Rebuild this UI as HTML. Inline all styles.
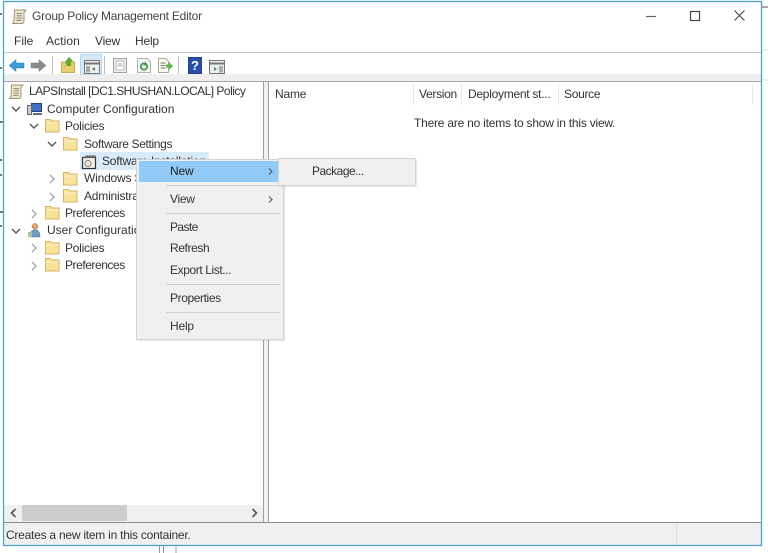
<!DOCTYPE html>
<html><head><meta charset="utf-8"><style>
html,body{margin:0;padding:0;background:#fff}
#r{position:relative;width:768px;height:553px;overflow:hidden;background:#fff;font:12px/16px "Liberation Sans",sans-serif;color:#333;filter:blur(.25px)}
#r div,#r svg{position:absolute}
.t{white-space:nowrap;height:16px}
.b{background:#f0f0f0}
</style></head><body><div id="r">
<svg width="768" height="553" style="left:0;top:0"><defs>
<g id="f"><path d="M.5 1.500h5l1 1.500h7.500v11H.5z" fill="#f9e29a" stroke="#d6b264"/><path d="M1.500 5h12" stroke="#fff4cf"/></g>
<path id="cd" d="M0 0l4 4 4-4" fill="none" stroke="#555" stroke-width="1.400"/>
<path id="cr" d="M0 0l4 4-4 4" fill="none" stroke="#a6a6a6" stroke-width="1.400"/>
<g id="s"><path d="M3.500 1H15l-2 2.500v8.500c0 1.500-1 2.500-2 2.500H1c1.500 0 2-1 2-2.500z" fill="#efe6c8" stroke="#9c9478"/><path d="M5.500 4.500h5.500M5.500 6.800h5.500M5.500 9.100h5.500M5 11.400h5.500" stroke="#8d8d80"/></g>
</defs>
<path d="M0 14h2M0 68h2M0 122h3M0 160h2M0 175h2M0 212h3M0 226h2" stroke="#777" stroke-width="2"/>
<path d="M762 7h6" stroke="#aaa" stroke-width="2"/><path d="M762 50h6M762 80h6" stroke="#ddd"/>
<path d="M159.500 546v7M163.500 546v7M176 546v7" stroke="#999"/>
</svg>

<!-- chrome -->
<div style="left:4px;top:52px;width:757px;height:1px;background:#c4c4c4"></div>
<div style="left:4px;top:74px;width:757px;height:7px;background:#eeeeee"></div>
<div style="left:4px;top:81px;width:757px;height:1px;background:#a8a8a8"></div>
<div class="t" style="left:32px;top:8px;letter-spacing:-.23px;color:#444">Group Policy Management Editor</div>
<div class="t" style="left:14px;top:33px">File</div>
<div class="t" style="left:46px;top:33px;letter-spacing:.1px">Action</div>
<div class="t" style="left:95px;top:33px;letter-spacing:-.2px">View</div>
<div class="t" style="left:135px;top:33px;letter-spacing:-.2px">Help</div>
<svg width="768" height="100" style="left:0;top:0">
<use href="#s" transform="translate(11 9)"/>
<path d="M646 16.500h10" stroke="#666" stroke-width="1.200"/>
<rect x="690.500" y="11.500" width="9" height="9" fill="none" stroke="#444" stroke-width="1.200"/>
<path d="M734.500 10.500l10 10M744.500 10.500l-10 10" stroke="#444" stroke-width="1.100"/>
<rect x="80.500" y="54.500" width="21" height="20" fill="#d4e8f8" stroke="#b6d8f2"/>
<path d="M9 65.500l7-6v3.500h8v5h-8v3.500z" fill="#3d9bd6" stroke="#2b7fb8" stroke-width=".5"/>
<path d="M46 65.500l-7-6v3.500h-8v5h8v3.500z" fill="#8a8a8a" stroke="#777" stroke-width=".5"/>
<path d="M52.500 56v18M104.500 56v18M178.500 56v18" stroke="#bcbcbc"/>
<path d="M61.500 62h13v10.500h-13z" fill="#e9cd6e" stroke="#c7a94c"/><path d="M65 62l4-5 4 4-2 1v4h-4z" fill="#5eaa3c"/>
<g transform="translate(84 60)"><rect x=".5" y=".5" width="15" height="13" fill="#eee" stroke="#777"/><path d="M1 3.500h14" stroke="#777" stroke-width="2"/><rect x="2" y="6" width="4" height="6.500" fill="#aaa"/><path d="M11 7v4l-3-2z" fill="#4a8a6a"/></g>
<g transform="translate(113 58)"><rect x=".5" y=".5" width="13" height="14" fill="#eeeeee" stroke="#a0a0a0"/><rect x="3" y="3" width="8" height="9" fill="#fff" stroke="#b5b5b5"/><path d="M4.500 6h5M4.500 8h5" stroke="#aaa"/></g>
<g transform="translate(137 58)"><path d="M.5.500h10l3 3v11H.5z" fill="#f4f4f4" stroke="#b0b0b0"/><circle cx="7" cy="8.500" r="3.200" fill="none" stroke="#4a9a50" stroke-width="1.800"/><path d="M9 3.500v4h-3z" fill="#4a9a50"/></g>
<g transform="translate(158 58)"><path d="M.5.500h7l3 3v11H.5z" fill="#fbfbf0" stroke="#a8a890"/><path d="M2.500 5h5M2.500 7.500h5M2.500 10h5" stroke="#777"/><path d="M8 6.500h3V4l4 4-4 4V9.500H8z" fill="#5eb84a"/></g>
<rect x="188.500" y="57.500" width="13" height="16" fill="#2a4fa8" stroke="#24408c"/>
<text x="195" y="70" font-family="Liberation Sans" font-size="13" font-weight="bold" fill="#fff" text-anchor="middle">?</text>
<g transform="translate(209 60)"><rect x=".5" y=".5" width="15" height="13" fill="#eee" stroke="#777"/><path d="M1 3.500h14" stroke="#777" stroke-width="2"/><rect x="10" y="6" width="4" height="6.500" fill="#aaa"/><path d="M5 7v4l3-2z" fill="#4a8a6a"/></g>
</svg>

<!-- left pane -->
<div style="left:4px;top:82px;width:259px;height:440px;background:#fff;border-right:1px solid #a0a0a0"></div>
<div style="left:80px;top:152px;width:129px;height:18px;background:#d9ebf9"></div>
<svg width="270" height="280" style="left:0;top:0">
<use href="#s" transform="translate(8 84)"/>
<use href="#cd" x="12" y="107"/>
<g transform="translate(27 102)"><rect x="4.500" y="1.500" width="10" height="8" fill="#3f6fc4" stroke="#27407c"/><rect x=".5" y="3.500" width="4" height="9" fill="#c4ccd8" stroke="#667"/><path d="M6 12h9" stroke="#5c6a80" stroke-width="2"/></g>
<use href="#cd" x="30" y="124"/><use href="#f" x="45" y="118"/>
<use href="#cd" x="48" y="142"/><use href="#f" x="63" y="136"/>
<g transform="translate(82 155)"><rect x=".5" y="2.500" width="13" height="11" fill="#f1efe6" stroke="#333" stroke-width="1.200"/><path d="M1 3l3-2.500h10l-1 2.500z" fill="#666"/><circle cx="6" cy="8.500" r="3" fill="#fff" stroke="#777"/><circle cx="6" cy="8.500" r="1" fill="#e5b94c"/></g>
<use href="#cr" x="50" y="175"/><use href="#f" x="63" y="171"/>
<use href="#cr" x="50" y="193"/><use href="#f" x="63" y="188"/>
<use href="#cr" x="32" y="210"/><use href="#f" x="45" y="205"/>
<use href="#cd" x="12" y="229"/>
<g transform="translate(27 223)"><circle cx="8" cy="3.500" r="3" fill="#d9a878" stroke="#8a7050" stroke-width=".5"/><path d="M3 14c0-6 2-7 5-7s5 1 5 7z" fill="#6f9cc4" stroke="#4c7090" stroke-width=".5"/><rect x="1" y="9" width="4" height="5" fill="#a8c4a8"/></g>
<use href="#cr" x="32" y="244"/><use href="#f" x="45" y="240"/>
<use href="#cr" x="32" y="262"/><use href="#f" x="45" y="257"/>
</svg>
<div class="t" style="left:29px;top:83px;letter-spacing:-.52px">LAPSInstall [DC1.SHUSHAN.LOCAL] Policy</div>
<div class="t" style="left:47px;top:101px">Computer Configuration</div>
<div class="t" style="left:65px;top:118px;letter-spacing:-.25px">Policies</div>
<div class="t" style="left:84px;top:136px;letter-spacing:-.35px">Software Settings</div>
<div class="t" style="left:102px;top:153px;letter-spacing:-.2px">Software Installation</div>
<div class="t" style="left:84px;top:170px;letter-spacing:-.2px">Windows Settings</div>
<div class="t" style="left:84px;top:188px;letter-spacing:-.2px">Administrative Templates</div>
<div class="t" style="left:65px;top:205px;letter-spacing:-.45px">Preferences</div>
<div class="t" style="left:47px;top:222px">User Configuration</div>
<div class="t" style="left:65px;top:240px;letter-spacing:-.25px">Policies</div>
<div class="t" style="left:65px;top:257px;letter-spacing:-.45px">Preferences</div>

<!-- scrollbar -->
<div class="b" style="left:4px;top:505px;width:259px;height:17px"></div>
<div style="left:22px;top:505px;width:105px;height:16px;background:#cdcdcd"></div>
<svg width="270" height="20" style="left:0;top:504px"><path d="M15.500 5l-4 4 4 4M252.500 5l4 4-4 4" fill="none" stroke="#555" stroke-width="1.600"/></svg>

<!-- right pane -->
<div style="left:264px;top:82px;width:4px;height:440px;background:#f0f0f0"></div>
<div style="left:268px;top:82px;width:492px;height:440px;background:#fff;border-left:1px solid #a0a0a0"></div>
<svg width="768" height="553" style="left:0;top:0"><path d="M413.500 84v21M461.500 84v21M558.500 84v21M752.500 84v21" stroke="#e6e6e6"/></svg>
<div class="t" style="left:275px;top:86px;letter-spacing:-.2px">Name</div>
<div class="t" style="left:419px;top:86px;letter-spacing:-.3px">Version</div>
<div class="t" style="left:468px;top:86px;letter-spacing:-.27px">Deployment st...</div>
<div class="t" style="left:564px;top:86px;letter-spacing:-.3px">Source</div>
<div class="t" style="left:414px;top:115px;letter-spacing:-.22px">There are no items to show in this view.</div>

<!-- status -->
<div style="left:4px;top:522px;width:757px;height:1px;background:#8c8c8c"></div>
<div class="b" style="left:4px;top:523px;width:757px;height:22px"></div>
<div style="left:676px;top:523px;width:1px;height:22px;background:#dcdcdc"></div>
<div class="t" style="left:6px;top:527px;letter-spacing:-.24px">Creates a new item in this container.</div>

<!-- menu -->
<div class="b" style="left:136px;top:159px;width:146px;height:179px;border:1px solid #d2d2d2;box-shadow:1px 1px 1px rgba(0,0,0,.1)"></div>
<div style="left:139px;top:161px;width:139px;height:21px;background:#91c9f7"></div>
<div class="b" style="left:278px;top:158px;width:136px;height:26px;border:1px solid #d2d2d2;box-shadow:1px 1px 1px rgba(0,0,0,.1)"></div>
<svg width="768" height="553" style="left:0;top:0"><path d="M166 185.500h114M166 213.500h114M166 284.500h114M166 312.500h114" stroke="#d0d0d0"/><path d="M269 168.500l3 3-3 3M269 196.500l3 3-3 3" fill="none" stroke="#555" stroke-width="1.100"/></svg>
<div class="t" style="left:170px;top:163px;color:#222;letter-spacing:-.2px">New</div>
<div class="t" style="left:170px;top:191px;letter-spacing:-.3px">View</div>
<div class="t" style="left:170px;top:219px;letter-spacing:-.6px">Paste</div>
<div class="t" style="left:170px;top:240px;letter-spacing:-.4px">Refresh</div>
<div class="t" style="left:170px;top:262px;letter-spacing:-.4px">Export List...</div>
<div class="t" style="left:170px;top:290px;letter-spacing:-.4px">Properties</div>
<div class="t" style="left:170px;top:318px;letter-spacing:-.2px">Help</div>
<div class="t" style="left:312px;top:163px;letter-spacing:-.5px">Package...</div>

<!-- window frame drawn last -->
<svg width="768" height="553" style="left:0;top:0"><rect x="3.500" y="1.500" width="758" height="544" fill="none" stroke="#4aa3d4" stroke-width="1.300"/></svg>
</div></body></html>
